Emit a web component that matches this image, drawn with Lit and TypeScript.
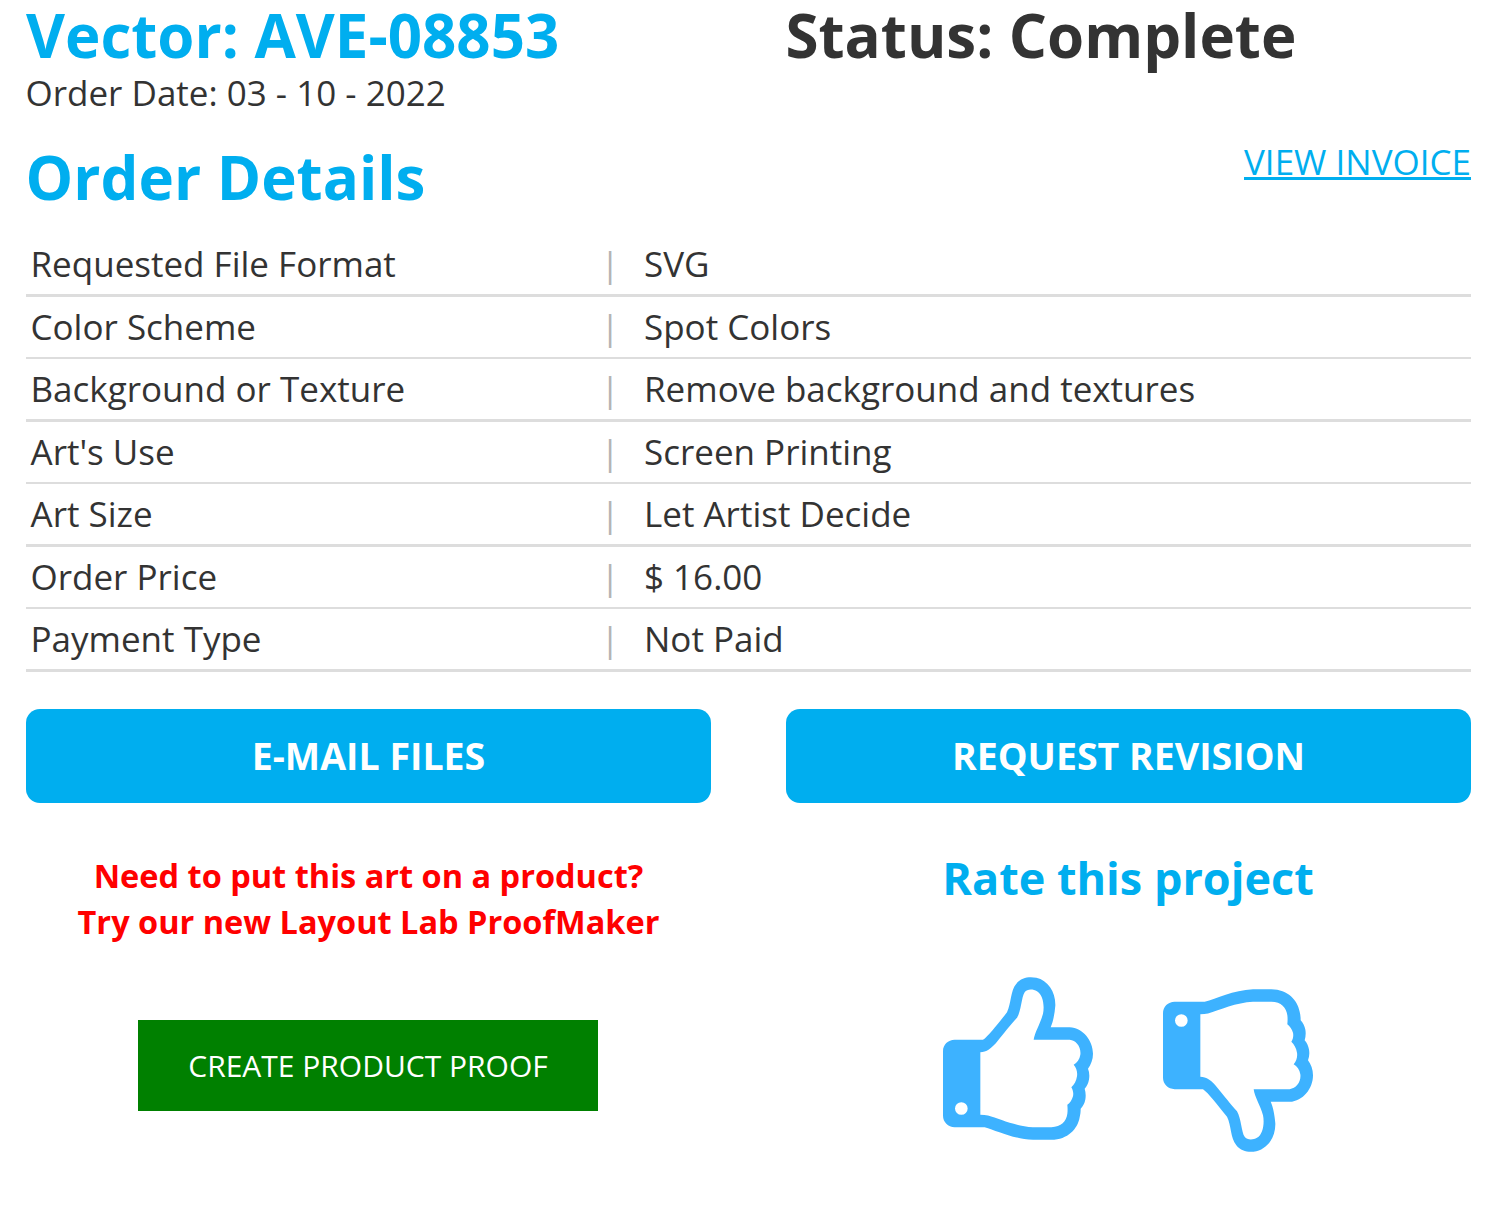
import { LitElement, html, css, svg } from "lit";
import { customElement } from "lit/decorators.js";

const rows: [string, string][] = [
  ["Requested File Format", "SVG"],
  ["Color Scheme", "Spot Colors"],
  ["Background or Texture", "Remove background and textures"],
  ["Art's Use", "Screen Printing"],
  ["Art Size", "Let Artist Decide"],
  ["Order Price", "$ 16.00"],
  ["Payment Type", "Not Paid"],
];

const thumb = svg`<path fill-rule="evenodd" d="M105 238 L190 238 C205 228 235 190 262 155 C275 130 272 90 290 70 C305 50 330 48 350 52 C385 60 408 95 407 135 C405 160 400 185 393 200 L450 200 C490 202 520 240 520 280 C520 297 514 313 505 325 C509 335 510 345 508 357 C506 368 502 377 495 385 C498 395 499 405 497 417 C495 428 490 437 483 445 C483 455 482 462 480 470 C474 505 445 537 395 538 L340 538 C280 535 230 510 195 500 L105 500 C85 500 70 485 70 465 L70 272 C70 253 85 238 105 238 Z M182 275 L182 463 C190 463 198 464 205 465 C240 475 290 498 340 500 L395 500 C425 500 440 482 443 460 C444 452 444 445 443 433 C451 427 457 418 460 407 C462 398 460 388 455 380 C464 372 470 360 472 347 C474 335 470 322 462 313 C472 307 480 297 482 283 C485 260 470 240 450 238 L342 238 C345 215 362 190 370 160 C375 135 370 102 352 92 C340 85 322 85 315 95 C305 110 305 150 292 172 C275 190 250 222 235 240 C215 265 200 275 182 275 Z M125 425 A19 19 0 1 0 125 463 A19 19 0 1 0 125 425 Z"/>`;

@customElement("app-root")
export class AppRoot extends LitElement {
  static styles = css`
    :host {
      display: block;
      width: 1501px;
      height: 1226px;
      box-sizing: border-box;
      padding: 0 30px 0 26px;
      font-family: "Open Sans", sans-serif;
      color: #333;
      background: #fff;
    }
    .cols {
      display: grid;
      grid-template-columns: 685px 685px;
      column-gap: 75px;
    }
    h1 {
      margin: 0;
      font-size: 60px;
      line-height: 70px;
      font-weight: 700;
    }
    .blue { color: #00aeef; }
    .date { font-size: 35px; line-height: 40px; margin-top: 3px; margin-left: -0.5px; }
    .status { margin-left: -0.5px; }
    .details-head {
      display: flex;
      justify-content: space-between;
      align-items: flex-start;
      margin-top: 29px;
    }
    .details-head h1 { margin-left: -0.5px; }
    a.inv {
      font-size: 35px;
      line-height: 46px;
      color: #00aeef;
      text-decoration: underline;
      margin-top: -3px;
    }
    .table { margin-top: 22px; }
    .row {
      display: grid;
      grid-template-columns: 570px 1fr;
      grid-template-rows: 60px 2.5px;
      font-size: 35px;
      padding-left: 4.5px;
    }
    .key, .val {
      line-height: 60px;
    }
    .rule {
      grid-column: 1 / -1;
      margin-left: -4.5px;
      background: #ddd;
    }
    .sep {
      display: inline-block;
      width: 43.5px;
      color: #b4b4b4;
    }
    .btns { margin-top: 37.5px; }
    .btn {
      height: 92px;
      padding-bottom: 2px;
      border-radius: 14px;
      background: #00aeef;
      color: #fff;
      font-size: 37.5px;
      font-weight: 700;
      display: flex;
      align-items: center;
      justify-content: center;
    }
    .lower { margin-top: 50px; }
    .promo {
      display: flex;
      flex-direction: column;
      align-items: center;
    }
    .red {
      color: #f00;
      font-size: 32.5px;
      font-weight: 700;
      line-height: 46px;
      text-align: center;
    }
    .proof {
      margin: 75px 2px 0 0;
      width: 460px;
      height: 91px;
      padding-left: 1px;
      box-sizing: border-box;
      background: #008000;
      color: #fff;
      font-size: 30px;
      display: flex;
      align-items: center;
      justify-content: center;
    }
    .rate {
      display: flex;
      flex-direction: column;
      align-items: center;
    }
    .rate h2 {
      margin: -5px 1px 0 0;
      font-size: 45px;
      line-height: 60px;
      font-weight: 700;
      color: #00aeef;
    }
    .thumbs {
      display: flex;
      gap: 70px;
      align-items: flex-start;
      margin: 69px 2px 0 0;
    }
    svg { width: 150px; height: 163px; fill: #3db2ff; display: block; }
    .down { margin-top: 12px; }
  `;

  render() {
    return html`
      <div class="cols">
        <div>
          <h1 class="blue">Vector: AVE-08853</h1>
          <div class="date">Order Date: 03 - 10 - 2022</div>
        </div>
        <h1 class="status">Status: Complete</h1>
      </div>
      <div class="details-head">
        <h1 class="blue">Order Details</h1>
        <a class="inv" href="#">VIEW INVOICE</a>
      </div>
      <div class="table">
        ${rows.map(
          ([k, v]) => html`<div class="row">
            <div class="key">${k}</div>
            <div class="val"><span class="sep">|</span>${v}</div>
            <div class="rule"></div>
          </div>`
        )}
      </div>
      <div class="cols btns">
        <div class="btn">E-MAIL FILES</div>
        <div class="btn">REQUEST REVISION</div>
      </div>
      <div class="cols lower">
        <div class="promo">
          <div class="red">Need to put this art on a product?<br />Try our new Layout Lab ProofMaker</div>
          <div class="proof">CREATE PRODUCT PROOF</div>
        </div>
        <div class="rate">
          <h2>Rate this project</h2>
          <div class="thumbs">
            <svg viewBox="70 50 450 488">${thumb}</svg>
            <svg class="down" viewBox="70 50 450 488"><g transform="translate(0 588) scale(1 -1)">${thumb}</g></svg>
          </div>
        </div>
      </div>
    `;
  }
}
